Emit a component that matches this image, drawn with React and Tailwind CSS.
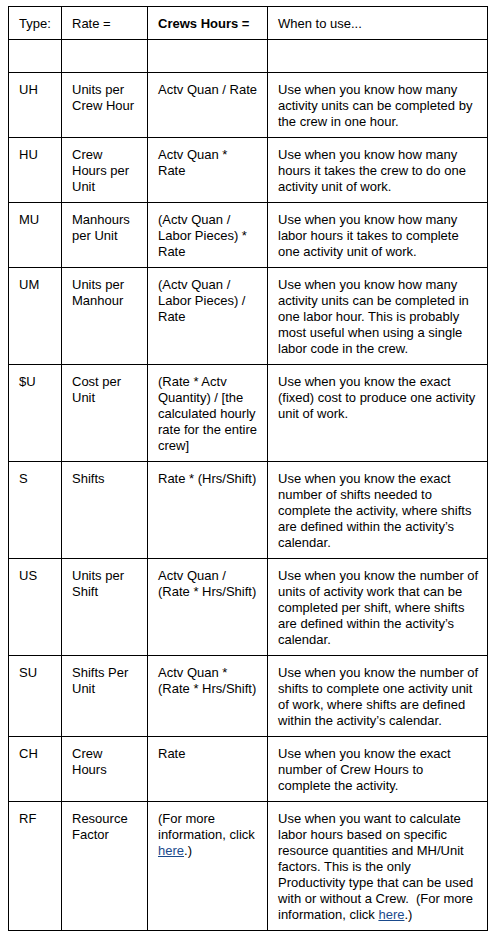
import React from 'react'

const rows = [
  [['UH'], ['Units per', 'Crew Hour'], ['Actv Quan / Rate'], ['Use when you know how many', 'activity units can be completed by', 'the crew in one hour.']],
  [['HU'], ['Crew', 'Hours per', 'Unit'], ['Actv Quan *', 'Rate'], ['Use when you know how many', 'hours it takes the crew to do one', 'activity unit of work.']],
  [['MU'], ['Manhours', 'per Unit'], ['(Actv Quan /', 'Labor Pieces) *', 'Rate'], ['Use when you know how many', 'labor hours it takes to complete', 'one activity unit of work.']],
  [['UM'], ['Units per', 'Manhour'], ['(Actv Quan /', 'Labor Pieces) /', 'Rate'], ['Use when you know how many', 'activity units can be completed in', 'one labor hour. This is probably', 'most useful when using a single', 'labor code in the crew.']],
  [['$U'], ['Cost per', 'Unit'], ['(Rate * Actv', 'Quantity) / [the', 'calculated hourly', 'rate for the entire', 'crew]'], ['Use when you know the exact', '(fixed) cost to produce one activity', 'unit of work.']],
  [['S'], ['Shifts'], ['Rate * (Hrs/Shift)'], ['Use when you know the exact', 'number of shifts needed to', 'complete the activity, where shifts', 'are defined within the activity\u2019s', 'calendar.']],
  [['US'], ['Units per', 'Shift'], ['Actv Quan /', '(Rate * Hrs/Shift)'], ['Use when you know the number of', 'units of activity work that can be', 'completed per shift, where shifts', 'are defined within the activity\u2019s', 'calendar.']],
  [['SU'], ['Shifts Per', 'Unit'], ['Actv Quan *', '(Rate * Hrs/Shift)'], ['Use when you know the number of', 'shifts to complete one activity unit', 'of work, where shifts are defined', 'within the activity\u2019s calendar.']],
  [['CH'], ['Crew', 'Hours'], ['Rate'], ['Use when you know the exact', 'number of Crew Hours to', 'complete the activity.']],
  [['RF'], ['Resource', 'Factor'], ['(For more', 'information, click', '{here}.)'], ['Use when you want to calculate', 'labor hours based on specific', 'resource quantities and MH/Unit', 'factors. This is the only', 'Productivity type that can be used', 'with or without a Crew.  (For more', 'information, click {here}.)']],
]

function Line({ text }) {
  const parts = text.split('{here}')
  return (
    <div className="whitespace-pre">
      {parts.map((p, i) => (
        <React.Fragment key={i}>
          {p}
          {i < parts.length - 1 && <a href="#" className="text-[#1a4a8c] underline">here</a>}
        </React.Fragment>
      ))}
    </div>
  )
}

function Cell({ lines = [], bold }) {
  return (
    <div className={`bg-white pl-[10px] pr-[7px] pt-[9px] pb-[7px] overflow-hidden ${bold ? 'font-bold' : ''}`}>
      {lines.length === 0 ? <div>&nbsp;</div> : lines.map((l, i) => <Line key={i} text={l} />)}
    </div>
  )
}

export default function App() {
  return (
    <div className="min-h-screen bg-white pt-[6px] pl-[8px] text-black text-[13px] leading-[16px]" style={{ fontFamily: '"Liberation Sans", Arial, sans-serif' }}>
      <div className="grid w-[480px] grid-cols-[52px_85px_119px_219px] gap-px bg-black p-px">
        <Cell lines={['Type:']} />
        <Cell lines={['Rate =']} />
        <Cell lines={['Crews Hours =']} bold />
        <Cell lines={['When to use...']} />
        <Cell />
        <Cell />
        <Cell />
        <Cell />
        {rows.map((r, i) => (
          <React.Fragment key={i}>
            {r.map((c, j) => <Cell key={j} lines={c} />)}
          </React.Fragment>
        ))}
      </div>
    </div>
  )
}
